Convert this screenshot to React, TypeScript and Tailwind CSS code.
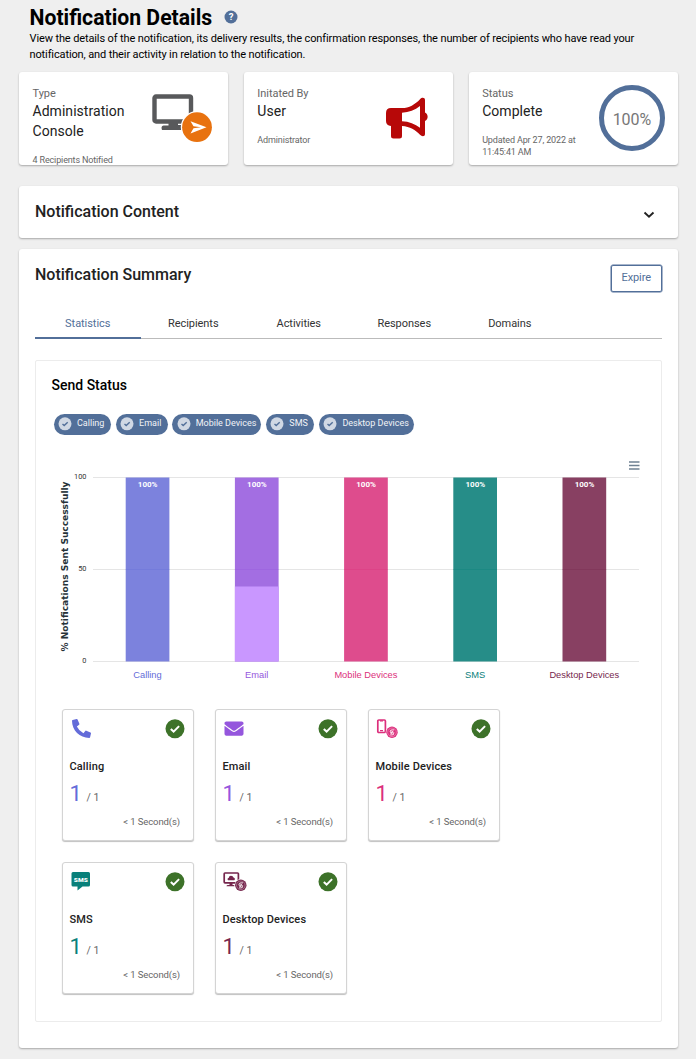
import type { ReactNode } from 'react'
import { FaPhoneAlt, FaEnvelope } from 'react-icons/fa'

const TABS = ['Statistics', 'Recipients', 'Activities', 'Responses', 'Domains']

const CHIPS = [
  { label: 'Calling', width: 'w-[57.5px]' },
  { label: 'Email', width: 'w-[52px]' },
  { label: 'Mobile Devices', width: 'w-[89px]' },
  { label: 'SMS', width: 'w-[48.5px]' },
  { label: 'Desktop Devices', width: 'w-[95px]' },
]

const BARS = [
  { label: 'Calling', x: 125.7, color: '#646cd9', fill: '#7c82dd' },
  { label: 'Email', x: 234.9, color: '#9556dd', fill: '#a36ee2' },
  { label: 'Mobile Devices', x: 344.1, color: '#dc2f7c', fill: '#de4c8d' },
  { label: 'SMS', x: 453.3, color: '#08807a', fill: '#268d88' },
  { label: 'Desktop Devices', x: 562.5, color: '#76264d', fill: '#884062' },
]

function MonitorSendIcon() {
  return (
    <svg viewBox="0 0 62 50" className="h-[50px] w-[62px]">
      <rect x="3.5" y="3.5" width="36.500" height="25" rx="1.5" fill="none" stroke="#58595b" strokeWidth="4.400" />
      <path fill="#58595b" d="M17.500 28h9.500v4h4v5H11q-1.500-4 1.500-4.500h5z" />
      <circle cx="46" cy="34.200" r="16.200" fill="#fff" />
      <circle cx="46" cy="34.200" r="14.900" fill="#e8720f" />
      <path fill="#fff" d="M39.500 28.300l16 5.900-16 6.200 3-5.100 7.500-1.100-7.500-1z" />
    </svg>
  )
}

function MegaphoneIcon() {
  return (
    <svg viewBox="0 0 42 42" className="h-[42px] w-[42px]" fill="#b70808">
      <path
        fillRule="evenodd"
        d="M5 11h11c7 0 13-3.500 18-8.800 2-2.200 5-1.700 5 .8v12.600c3.500 1.400 3.500 7 0 8.400V37c0 2.500-3 3-5 .8-4.500-5-10-8.300-18-8.800v10q0 2.500-2.500 2.500h-6Q5 41.500 5 39V29Q0 28.500 0 24v-8q0-5 5-5zm11 4.800v8.400c7 .3 13 2.700 18 6.600V9c-5 4-11 6.300-18 6.800z"
      />
    </svg>
  )
}

function CoinMark({ x, y, color }: { x: number; y: number; color: string }) {
  return (
    <g transform={`translate(${x} ${y})`}>
      <circle r="6.200" fill="#fff" />
      <circle r="5.700" fill={color} />
      <circle r="4.300" fill="none" stroke="#fff" strokeWidth="0.500" opacity="0.600" />
      <path d="M2.200-2.400H.2Q-1.800-2.400-1.800-1T0 .2Q1.800.6 1.800 1.600T0 2.600H-1.800M-.4-.9Q1.600-.8 2 .4M-2 .2Q-1.400 1.200.2 1.200" fill="none" stroke="#fff" strokeWidth="0.900" />
    </g>
  )
}

function MobileIcon() {
  return (
    <svg viewBox="0 0 22 20" className="h-5 w-[22px]">
      <rect x="1.800" y="1" width="7.600" height="12.500" rx="1" fill="none" stroke="#dc2f7c" strokeWidth="1.700" />
      <path d="M4 1.800h3M4 11.700h3" stroke="#dc2f7c" strokeWidth="1.200" />
      <CoinMark x={16} y={13.3} color="#dc2f7c" />
    </svg>
  )
}

function DesktopIcon() {
  return (
    <svg viewBox="0 0 24 20" className="h-5 w-6">
      <rect x="1.200" y="1" width="14.200" height="9.800" rx=".8" fill="none" stroke="#76264d" strokeWidth="1.700" />
      <path d="M5 8.300q-1.200-2 .8-2.600Q6 3.700 8 3.800q2 0 2.500 1.700 2.400 1 .8 2.800zM6.500 11h3v2h2v1.300H3.500Q3.500 13 5 13h1.500z" fill="#76264d" />
      <CoinMark x={17.8} y={13.3} color="#76264d" />
    </svg>
  )
}

function SmsIcon() {
  return (
    <svg viewBox="0 0 20 20" className="h-5 w-5">
      <path fill="#08807a" d="M2 0h15.500Q19 0 19 1.500V13q0 1.500-1.500 1.500h-6L6.500 18.500v-4H2Q.5 14.500.5 13V1.500Q.5 0 2 0z" />
      <text x="9.800" y="9.800" textAnchor="middle" fill="#fff" fontSize="6" fontWeight="900" textLength="14" lengthAdjust="spacingAndGlyphs">SMS</text>
    </svg>
  )
}

const CHANNELS: { label: string; color: string; icon: ReactNode }[] = [
  { label: 'Calling', color: 'text-[#646cd9]', icon: <FaPhoneAlt className="ml-[2.500px] h-[19px] w-[19px]" /> },
  { label: 'Email', color: 'text-[#9556dd]', icon: <FaEnvelope className="ml-[1.500px] h-[19px] w-5" /> },
  { label: 'Mobile Devices', color: 'text-[#dc2f7c]', icon: <MobileIcon /> },
  { label: 'SMS', color: 'text-[#08807a]', icon: <div className="ml-[1.500px]"><SmsIcon /></div> },
  { label: 'Desktop Devices', color: 'text-[#76264d]', icon: <DesktopIcon /> },
]

function CheckCircle() {
  return (
    <svg viewBox="0 0 20 20" className="h-5 w-5">
      <circle cx="10" cy="9.700" r="9.500" fill="#3d7229" />
      <path d="M5.800 10l2.800 2.600 5.500-5.500" fill="none" stroke="#fff" strokeWidth="2" />
    </svg>
  )
}

function Panel({ className, children }: { className: string; children: ReactNode }) {
  return (
    <div className={`rounded-[3px] bg-white shadow-[0_1px_2px_rgba(0,0,0,0.3)] ${className}`}>
      {children}
    </div>
  )
}

function InfoCard({ label, title, sub, children }: { label: string; title: ReactNode; sub: ReactNode; children: ReactNode }) {
  return (
    <Panel className="flex h-[92.500px] justify-between pl-[13.500px] pt-[13px]">
      <div className="whitespace-nowrap">
        <div className="pt-px text-[11px] leading-[15px] -tracking-[0.050px] text-[#666]">{label}</div>
        <div className="text-[14px] leading-5 tracking-[0.040px] text-[#222]">{title}</div>
        <div className="mt-[13px] text-[9px] leading-3 -tracking-[0.140px] text-[#666]">{sub}</div>
      </div>
      {children}
    </Panel>
  )
}

function StatusChart() {
  return (
    <svg viewBox="36 445 625 250" className="block h-[250px] w-[625px]">
      {[462, 465.5, 469].map((y) => (
        <path key={y} d={`M629 ${y}h10.500`} stroke="#6e8192" strokeWidth="1.500" />
      ))}
      <path d="M93 477.500h546M93 569.500h546M93 661.500h546" stroke="#e5e5e5" />
      {BARS.map((b) => (
        <g key={b.label}>
          <rect x={b.x} y="477.500" width="43.700" height="184" fill={b.fill} />
          {b.label === 'Email' && <rect x={b.x} y="586.500" width="43.700" height="75" fill="#c997ff" />}
          <path d={`M${b.x} 569.500h43.700`} stroke={b.color} opacity="0.300" />
          <text x={b.x + 22} y="487" textAnchor="middle" fill="#fff" fontSize="8" fontWeight="700" className="font-['Roboto']">100%</text>
          <text x={b.x + 21.8} y="678" textAnchor="middle" fill={b.color} fontSize="9.300" className="font-['Liberation_Sans']">{b.label}</text>
        </g>
      ))}
      <g fill="#333" fontSize="7.400" textAnchor="end" className="font-['Roboto']">
        <text x="86.500" y="478.500">100</text>
        <text x="86.500" y="570.500">50</text>
        <text x="86.500" y="662.500">0</text>
      </g>
      <text transform="translate(67.500 651.500) rotate(-90)" fill="#263238" fontSize="8.800" fontWeight="700" textLength="170" lengthAdjust="spacingAndGlyphs" className="font-['DejaVu_Sans']">
        % Notifications Sent Successfully
      </text>
    </svg>
  )
}

export default function App() {
  return (
    <div className="h-[1059px] overflow-hidden bg-[#efefef] pl-[19px] pr-[18px] pt-[6px] font-['Roboto',sans-serif]">
      <header className="h-[66px] whitespace-nowrap pl-[10.500px]">
        <div className="flex h-6 items-center">
          <h1 className="w-[183px] text-[21.200px] font-bold leading-6 text-black">Notification Details</h1>
          <svg viewBox="0 0 14 14" className="-mt-0.5 ml-[11.500px] h-[14px] w-[14px]">
            <circle cx="7" cy="7" r="6.500" fill="#526f99" />
            <text x="7" y="10.300" textAnchor="middle" fill="#fff" fontSize="9.500" fontWeight="700">?</text>
          </svg>
        </div>
        <p className="mt-px text-[11px] leading-4 -tracking-[0.120px] text-black">
          View the details of the notification, its delivery results, the confirmation responses, the number of recipients who have read your
          <br />
          notification, and their activity in relation to the notification.
        </p>
      </header>

      <div className="grid grid-cols-3 gap-x-[15.500px]">
        <InfoCard label="Type" title={<>Administration<br />Console</>} sub="4 Recipients Notified">
          <div className="mr-[15.500px] mt-[8px]"><MonitorSendIcon /></div>
        </InfoCard>
        <InfoCard label="Initated By" title="User" sub="Administrator">
          <div className="mr-[25px] mt-[12px]"><MegaphoneIcon /></div>
        </InfoCard>
        <InfoCard label="Status" title="Complete" sub={<>Updated Apr 27, 2022 at<br />11:45:41 AM</>}>
          <div className="mr-[13px] flex h-[66px] w-[66px] items-center justify-center rounded-full border-[5.500px] border-[#526f99] pt-[3px] text-[16px] text-[#777]">
            100%
          </div>
        </InfoCard>
      </div>

      <Panel className="mt-[21.500px] flex h-[52px] items-start justify-between px-4 pt-4">
        <h2 className="text-[16px] font-medium leading-5 text-[#222]">Notification Content</h2>
        <svg viewBox="0 0 12 8" className="mr-[7.500px] mt-[9px] h-2 w-3">
          <path d="M1.500 1.500L6 5.700l4.500-4.200" fill="none" stroke="#222" strokeWidth="1.900" />
        </svg>
      </Panel>

      <Panel className="mt-[11px] h-[799px] px-4 pt-4">
        <div className="flex items-start justify-between">
          <h2 className="text-[16px] font-medium leading-5 text-[#222]">Notification Summary</h2>
          <button className="h-[26.500px] w-[51.500px] rounded-[2px] border-[1.500px] border-[#526f99] text-[11px] leading-4 -tracking-[0.100px] text-[#526f99] shadow-[0_0_0_0.500px_#526f99]">Expire</button>
        </div>

        <nav className="mt-[16.500px] flex h-[31px] border-b border-[#bbb] text-center text-[11px] leading-[31px] -tracking-[0.050px]">
          {TABS.map((tab) => (
            <div
              key={tab}
              className={
                tab === 'Statistics'
                  ? 'h-[31px] w-[105.500px] border-b-2 border-[#526f99] text-[#526f99]'
                  : 'h-[31px] w-[105.500px] text-[#333]'
              }
            >
              {tab}
            </div>
          ))}
        </nav>

        <section className="mt-[21px] h-[662px] rounded-[2px] border border-[#ececec]">
          <h3 className="pl-[15.500px] pt-[14px] text-[14px] font-medium leading-5 text-black">Send Status</h3>
          <div className="mt-[18.500px] flex gap-[4.600px] pl-[17.500px]">
            {CHIPS.map((chip) => (
              <div key={chip.label} className={`flex h-[21px] items-center whitespace-nowrap rounded-full bg-[#526f99] pl-[4.500px] text-[9px] text-[#f1f3f7] ${chip.width}`}>
                <svg viewBox="0 0 14 14" className="mr-[5px] h-[14px] w-[14px] shrink-0">
                  <circle cx="7" cy="6.800" r="6.500" fill="#d0d8e4" />
                  <path d="M4.500 7l1.700 1.600 3.500-3.300" fill="none" stroke="#526f99" strokeWidth="1.400" />
                </svg>
                {chip.label}
              </div>
            ))}
          </div>

          <div className="mt-[10.500px]">
            <StatusChart />
          </div>

          <div className="mt-[14px] grid grid-cols-[repeat(3,132px)] gap-[21px] pl-[26px]">
            {CHANNELS.map((c) => (
              <div key={c.label} className="h-[132px] rounded-[3px] border border-[#d4d4d4] bg-white pl-[6.500px] pr-[8.500px] pt-[9px] shadow-[0_1px_1px_rgba(0,0,0,0.25)]">
                <div className={`flex h-5 items-start justify-between ${c.color}`}>
                  {c.icon}
                  <CheckCircle />
                </div>
                <div className="mt-[18px] text-[11px] font-medium leading-5 tracking-[0.130px] text-[#222]">{c.label}</div>
                <div className="mt-[5px] flex h-6 items-baseline">
                  <span className={`w-[12px] text-[22px] leading-6 ${c.color}`}>1</span>
                  <span className="ml-[5px] text-[10.500px] text-[#666]">/ 1</span>
                </div>
                <div className="mr-[4.500px] mt-[7.500px] text-right text-[9.500px] leading-4 -tracking-[0.100px] text-[#666]">&lt; 1 Second(s)</div>
              </div>
            ))}
          </div>
        </section>
      </Panel>
    </div>
  )
}
